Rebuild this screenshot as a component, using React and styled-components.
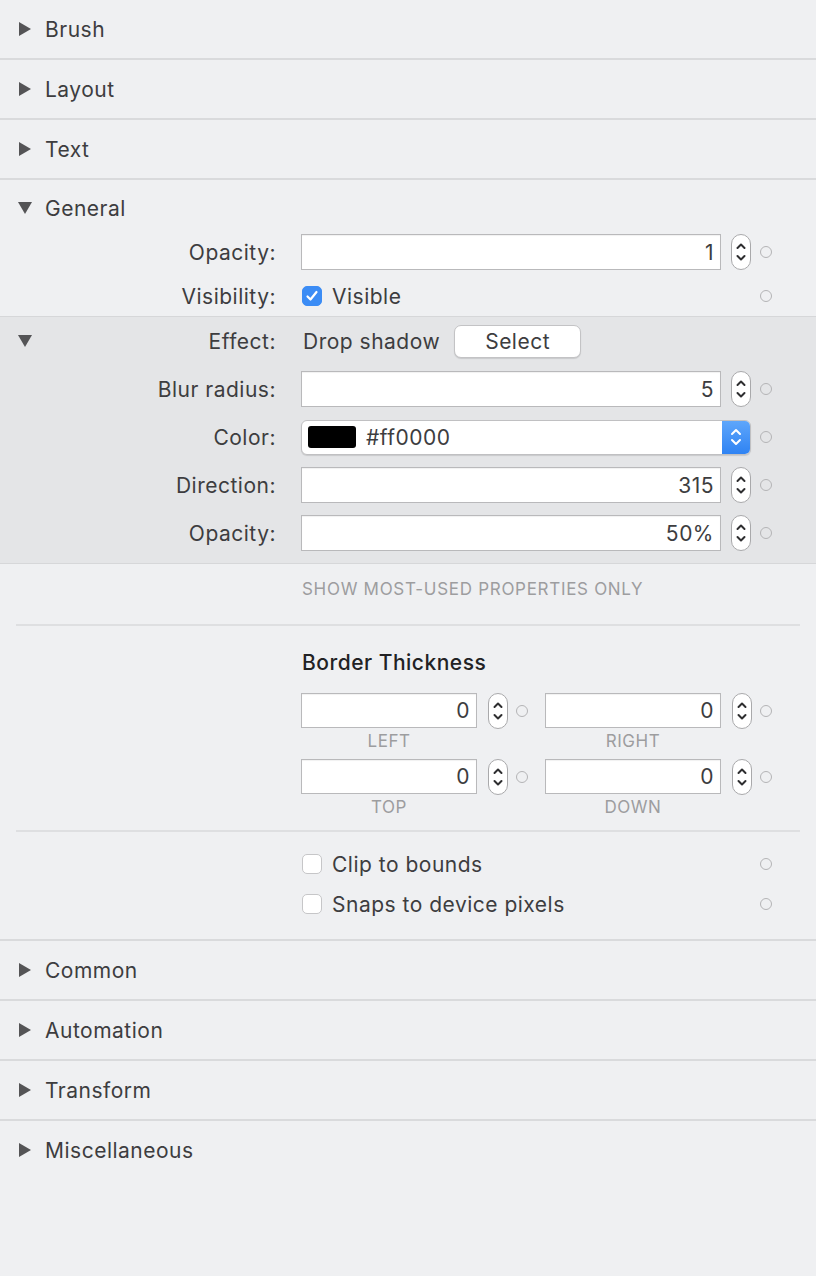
import React from "react";
import styled, { createGlobalStyle } from "styled-components";

const GlobalStyle = createGlobalStyle`
  html, body {
    margin: 0;
    padding: 0;
    background: #eff0f2;
  }
  body {
    font-family: Inter, "Noto Sans", "Liberation Sans", sans-serif;
    color: #3d3d3f;
    letter-spacing: 0.5px;
    -webkit-font-smoothing: antialiased;
  }
`;

const Panel = styled.div`
  width: 816px;
  min-height: 1276px;
  background: #eff0f2;
  display: flex;
  flex-direction: column;
`;

const SectionHeader = styled.div`
  height: 58px;
  display: flex;
  align-items: center;
  padding-left: 18px;
  font-size: 21px;
  color: #3d3d3f;
  border-bottom: ${(p) => (p.$line ? "2px solid #d9dadc" : "none")};
  ${(p) => p.$open && "height: 48px; padding-top: 8px; box-sizing: border-box;"}
`;

const Arrow = styled.span`
  width: 14px;
  height: 14px;
  display: inline-flex;
  align-items: center;
  justify-content: center;
  margin-right: 13px;
  svg {
    display: block;
  }
`;

const Triangle = ({ open }) => (
  <svg width="14" height="14" viewBox="0 0 14 14">
    {open ? (
      <polygon points="0,1 14,1 7,13" fill="#545456" />
    ) : (
      <polygon points="1,0 13,7 1,14" fill="#545456" />
    )}
  </svg>
);

const Section = ({ title, open, last, children }) => (
  <>
    <SectionHeader $open={open} $line={!open && !last}>
      <Arrow>
        <Triangle open={open} />
      </Arrow>
      {title}
    </SectionHeader>
    {children}
  </>
);

const Row = styled.div`
  display: flex;
  align-items: center;
  height: ${(p) => p.$h || 48}px;
`;

const Label = styled.div`
  width: 276px;
  box-sizing: border-box;
  padding-left: 18px;
  display: flex;
  align-items: center;
  justify-content: space-between;
  font-size: 21px;
  color: #3d3d3f;
`;

const LabelText = styled.span`
  margin-left: auto;
`;

const Control = styled.div`
  width: 450px;
  margin-left: 25px;
  display: flex;
  align-items: center;
  gap: ${(p) => p.$gap ?? 10}px;
`;

const Field = styled.div`
  box-sizing: border-box;
  width: ${(p) => p.$w || 420}px;
  height: ${(p) => p.$h || 36}px;
  background: #fff;
  border: 1px solid #b9b9bb;
  box-shadow: inset 0 1px 1px rgba(0, 0, 0, 0.06);
  display: flex;
  align-items: center;
  justify-content: flex-end;
  padding-right: 6px;
  font-size: 21px;
  color: #3d3d3f;
`;

const StepperBox = styled.div`
  box-sizing: border-box;
  width: 20px;
  height: 36px;
  border: 1px solid #a9a9ab;
  border-radius: 10px;
  background: #fff;
  display: flex;
  align-items: center;
  justify-content: center;
`;

const Stepper = () => (
  <StepperBox>
    <svg width="12" height="22" viewBox="0 0 12 22">
      <path
        d="M2.5 7 L6 3.5 L9.5 7 M2.5 15 L6 18.5 L9.5 15"
        fill="none"
        stroke="#2e2e30"
        strokeWidth="2"
        strokeLinecap="round"
        strokeLinejoin="round"
      />
    </svg>
  </StepperBox>
);

const Dot = styled.span`
  box-sizing: border-box;
  width: 12px;
  height: 12px;
  border-radius: 50%;
  border: 1px solid #b4b4b6;
  margin-left: ${(p) => p.$ml ?? 9}px;
  flex-shrink: 0;
`;

const CheckBox = styled.span`
  box-sizing: border-box;
  width: 20px;
  height: 20px;
  border-radius: 5px;
  display: inline-flex;
  align-items: center;
  justify-content: center;
  background: ${(p) => (p.$checked ? "#3b8cf5" : "#fff")};
  border: 1px solid ${(p) => (p.$checked ? "#3b8cf5" : "#c6c6c8")};
  margin-left: 1px;
  flex-shrink: 0;
`;

const CheckLabel = styled.span`
  font-size: 21px;
  color: #3d3d3f;
  margin-left: 10px;
  flex: 1;
`;

const Check = ({ checked, label }) => (
  <>
    <CheckBox $checked={checked}>
      {checked && (
        <svg width="14" height="14" viewBox="0 0 14 14">
          <path
            d="M2.5 7.5 L5.5 10.5 L11.5 3"
            fill="none"
            stroke="#fff"
            strokeWidth="2.2"
            strokeLinecap="round"
            strokeLinejoin="round"
          />
        </svg>
      )}
    </CheckBox>
    <CheckLabel>{label}</CheckLabel>
  </>
);

const EffectPanel = styled.div`
  background: #e4e5e7;
  border-top: 1px solid #d6d7d9;
  border-bottom: 1px solid #d6d7d9;
  padding-bottom: 6px;
`;

const PlainText = styled.span`
  font-size: 21px;
  color: #3d3d3f;
  margin-left: 2px;
`;

const Button = styled.button`
  box-sizing: border-box;
  width: 127px;
  height: 33px;
  margin-left: 14px;
  border-radius: 7px;
  background: #fff;
  border: 1px solid #c3c3c5;
  box-shadow: 0 1px 1px rgba(0, 0, 0, 0.12);
  font-family: inherit;
  letter-spacing: inherit;
  font-size: 21px;
  color: #3d3d3f;
  padding: 0;
`;

const ColorSelect = styled.div`
  box-sizing: border-box;
  width: 450px;
  height: 35px;
  border-radius: 6px;
  background: #fff;
  border: 1px solid #c0c0c2;
  box-shadow: 0 1px 1px rgba(0, 0, 0, 0.12);
  display: flex;
  align-items: center;
  overflow: hidden;
`;

const Swatch = styled.span`
  width: 48px;
  height: 22px;
  border-radius: 3px;
  background: ${(p) => p.$color};
  margin-left: 6px;
`;

const ColorText = styled.span`
  font-size: 21px;
  color: #3d3d3f;
  margin-left: 10px;
  flex: 1;
`;

const BlueArrows = styled.span`
  width: 28px;
  height: 100%;
  background: linear-gradient(#5ea6fb, #2f83f3);
  display: flex;
  align-items: center;
  justify-content: center;
`;

const Hint = styled.div`
  height: 50px;
  margin-bottom: 10px;
  padding-left: 302px;
  display: flex;
  align-items: center;
  font-size: 17px;
  letter-spacing: 0.7px;
  color: #9d9d9f;
  text-transform: uppercase;
`;

const Divider = styled.div`
  height: 2px;
  background: #dedfe1;
  margin: 0 16px;
`;

const SubHead = styled.div`
  box-sizing: border-box;
  height: 67px;
  padding: 25px 0 0 302px;
  line-height: 24px;
  font-size: 21px;
  font-weight: 500;
  color: #222224;
`;

const ThickGrid = styled.div`
  padding: 0 0 5px 301px;
  display: grid;
  grid-template-columns: 244px 244px;
`;

const ThickCell = styled.div`
  display: flex;
  flex-direction: column;
`;

const ThickRow = styled.div`
  display: flex;
  align-items: center;
  gap: 11px;
  height: 35px;
`;

const ThickLabel = styled.div`
  width: 176px;
  margin: 2px 0 7px;
  line-height: 22px;
  text-align: center;
  font-size: 17px;
  color: #9d9d9f;
`;

const ThickField = ({ value, label }) => (
  <ThickCell>
    <ThickRow>
      <Field $w={176} $h={35}>
        {value}
      </Field>
      <Stepper />
      <Dot $ml={-3} />
    </ThickRow>
    <ThickLabel>{label}</ThickLabel>
  </ThickCell>
);

const CheckList = styled.div`
  padding: 12px 0 15px;
`;

const FullDivider = styled.div`
  height: 2px;
  background: #d9dadc;
`;

const NumberRow = ({ label, value }) => (
  <Row>
    <Label>
      <LabelText>{label}</LabelText>
    </Label>
    <Control>
      <Field>{value}</Field>
      <Stepper />
    </Control>
    <Dot />
  </Row>
);

export default function App() {
  return (
    <Panel>
      <GlobalStyle />
      <Section title="Brush" />
      <Section title="Layout" />
      <Section title="Text" />
      <Section title="General" open>
        <NumberRow label="Opacity:" value="1" />
        <Row $h={40}>
          <Label>
            <LabelText>Visibility:</LabelText>
          </Label>
          <Control $gap={0}>
            <Check checked label="Visible" />
          </Control>
          <Dot />
        </Row>
        <EffectPanel>
          <Row>
            <Label>
              <Arrow>
                <Triangle open />
              </Arrow>
              <LabelText>Effect:</LabelText>
            </Label>
            <Control $gap={0}>
              <PlainText>Drop shadow</PlainText>
              <Button>Select</Button>
            </Control>
          </Row>
          <NumberRow label="Blur radius:" value="5" />
          <Row>
            <Label>
              <LabelText>Color:</LabelText>
            </Label>
            <Control>
              <ColorSelect>
                <Swatch $color="#000" />
                <ColorText>#ff0000</ColorText>
                <BlueArrows>
                  <svg width="14" height="22" viewBox="0 0 14 22">
                    <path
                      d="M3 8 L7 4 L11 8 M3 14 L7 18 L11 14"
                      fill="none"
                      stroke="#fff"
                      strokeWidth="2"
                      strokeLinecap="round"
                      strokeLinejoin="round"
                    />
                  </svg>
                </BlueArrows>
              </ColorSelect>
            </Control>
            <Dot />
          </Row>
          <NumberRow label="Direction:" value="315" />
          <NumberRow label="Opacity:" value="50%" />
        </EffectPanel>
        <Hint>Show most-used properties only</Hint>
        <Divider />
        <SubHead>Border Thickness</SubHead>
        <ThickGrid>
          <ThickField value="0" label="LEFT" />
          <ThickField value="0" label="RIGHT" />
          <ThickField value="0" label="TOP" />
          <ThickField value="0" label="DOWN" />
        </ThickGrid>
        <Divider />
        <CheckList>
          <Row $h={40}>
            <Label />
            <Control $gap={0}>
              <Check label="Clip to bounds" />
            </Control>
            <Dot />
          </Row>
          <Row $h={40}>
            <Label />
            <Control $gap={0}>
              <Check label="Snaps to device pixels" />
            </Control>
            <Dot />
          </Row>
        </CheckList>
        <FullDivider />
      </Section>
      <Section title="Common" />
      <Section title="Automation" />
      <Section title="Transform" />
      <Section title="Miscellaneous" last />
    </Panel>
  );
}
